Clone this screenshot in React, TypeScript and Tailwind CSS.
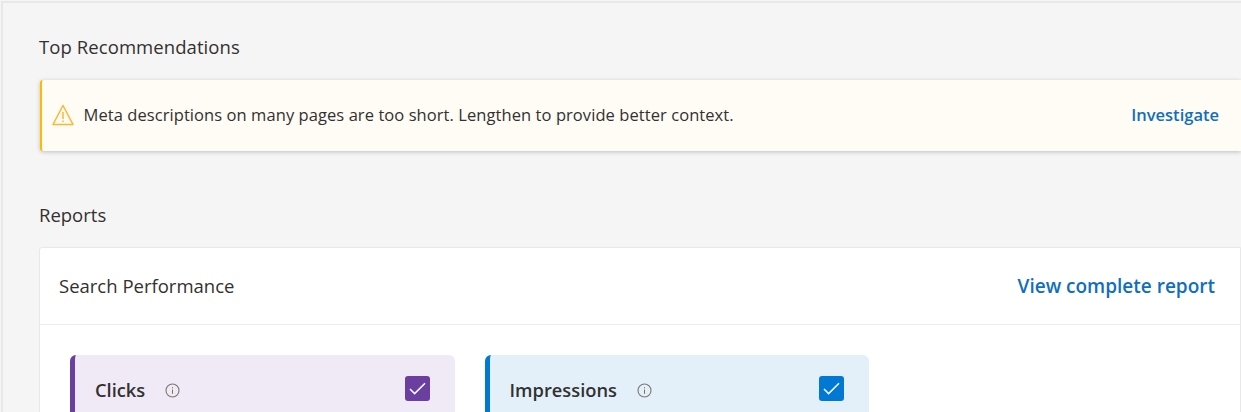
const font = { fontFamily: '"Open Sans", "Noto Sans", sans-serif' }

function InfoIcon() {
  return (
    <svg width="15" height="15" viewBox="0 0 15 15" fill="none" className="shrink-0">
      <circle cx="7.5" cy="7.5" r="6.5" stroke="#7a7774" strokeWidth="1.1" />
      <path d="M7.5 6.6v4.2" stroke="#8a6d3b" strokeWidth="1" />
      <path d="M7.5 4.2v1.1" stroke="#8a6d3b" strokeWidth="1" />
    </svg>
  )
}

function MetricCard({ title, bar, bg, box }: { title: string; bar: string; bg: string; box: string }) {
  return (
    <div className={`w-[384.5px] h-[80px] rounded-t-md border-l-[5px] ${bar} ${bg} pl-[20px] pr-[25px] pt-[20px] flex items-start justify-between`}>
      <div className="flex items-center gap-[20px] h-[30px]">
        <span className="text-[18.3px] font-semibold leading-[30px] text-[#323130]">{title}</span>
        <InfoIcon />
      </div>
      <div className={`w-[25px] h-[25px] rounded-[3px] ${box} flex items-center justify-center mt-[1px]`}>
        <svg width="17" height="13" viewBox="0 0 17 13" fill="none">
          <path d="M1 7l4.6 4.6L16 1.2" stroke="#ffffff" strokeWidth="1.5" />
        </svg>
      </div>
    </div>
  )
}

export default function App() {
  return (
    <div style={font} className="h-[412px] w-[1241px] overflow-hidden bg-[#f5f5f5]">
      <div className="h-full mt-[1px] ml-[1px] border-t-2 border-l-2 border-[#e8e8e8] pl-[36px] pt-[31px]">
        <h2 className="text-[18.5px] leading-[26px] text-[#323130] tracking-[0.08px]">Top Recommendations</h2>

        <div className="mt-[20px] ml-[0.5px] h-[71px] flex items-center justify-between bg-[#fffcf5] border-l-[2.5px] border-[#ffb900] rounded-l-[3px] shadow-[0_1px_4px_rgba(0,0,0,0.22)] pl-[10px] pr-[22px]">
          <div className="flex items-center gap-[10px] -mt-[1px]">
            <svg width="22" height="22" viewBox="0 0 22 22" fill="none">
              <path d="M11 1.5 L21 20.5 H1 Z" stroke="#ffb52e" strokeWidth="1.5" strokeLinejoin="round" />
              <path d="M11 8v7M11 16.5v1.6" stroke="#ffb52e" strokeWidth="1.5" />
            </svg>
            <span className="text-[16.5px] leading-[24px] text-[#323130] tracking-[0.07px]">
              Meta descriptions on many pages are too short. Lengthen to provide better context.
            </span>
          </div>
          <a className="text-[16.5px] font-semibold text-[#106ebe]">Investigate</a>
        </div>

        <h2 className="mt-[51px] text-[18.5px] leading-[26px] text-[#323130]">Reports</h2>

        <div className="mt-[19px] bg-white border border-[#e8e8e8] rounded-l-[3px] h-[300px]">
          <div className="h-[77px] flex items-center justify-between border-b border-[#ececec] pl-[19px] pr-[25px]">
            <span className="text-[18.5px] text-[#323130]">Search Performance</span>
            <a className="text-[19px] font-semibold text-[#106ebe]">View complete report</a>
          </div>
          <div className="flex gap-[30px] pl-[30px] pt-[30px]">
            <MetricCard title="Clicks" bar="border-[#6b3fa0]" bg="bg-[#f0eaf6]" box="bg-[#6b3fa0]" />
            <MetricCard title="Impressions" bar="border-[#0078d4]" bg="bg-[#e3f0fa]" box="bg-[#0078d4]" />
          </div>
        </div>
      </div>
    </div>
  )
}
